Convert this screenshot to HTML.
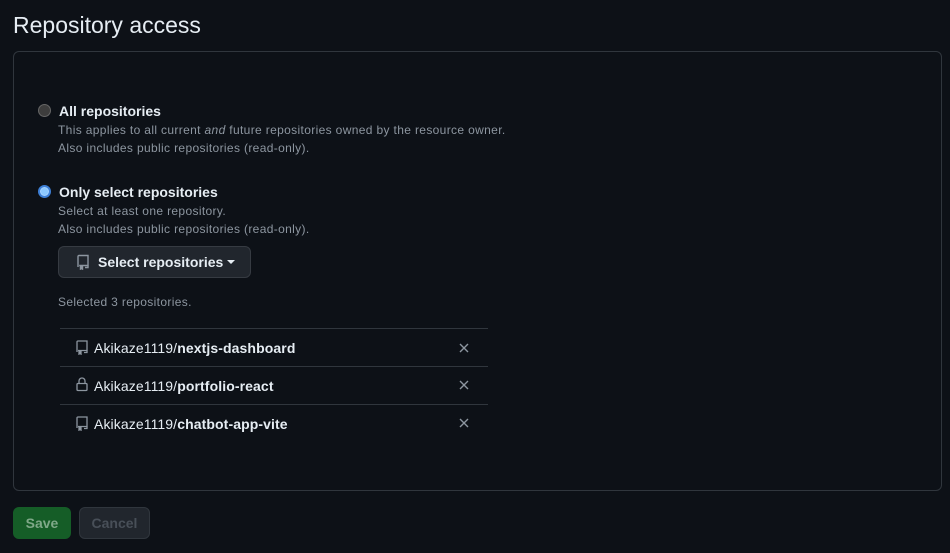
<!DOCTYPE html>
<html><head><meta charset="utf-8"><style>
*{margin:0;padding:0;box-sizing:border-box}
body{width:950px;height:553px;background:#0d1117;font-family:"Liberation Sans",sans-serif;color:#e6edf3;position:relative;overflow:hidden}
.a{position:absolute;white-space:nowrap}
.t{font-size:23px;left:13px;top:12px}
.box{position:absolute;left:13px;top:51px;width:929px;height:440px;border:1px solid #30363d;border-radius:6px}
.lab{font-size:14px;font-weight:bold}
.d{font-size:12px;color:#8d96a0;letter-spacing:0.35px}
.r{position:absolute;width:13px;height:13px;border-radius:50%}
.btn{position:absolute;left:58px;top:246px;width:193px;height:32px;background:#21262d;border:1px solid #363b42;border-radius:6px}
.ln{position:absolute;left:60px;width:428px;height:1px;background:#30363d}
.row{font-size:14px;letter-spacing:0.1px}
.row b{font-weight:bold}
</style></head><body>
<div class="a t">Repository access</div>
<div class="box"></div>
<div class="r" style="left:38px;top:104px;background:#3d3d3d;border:1px solid #666"></div>
<div class="a lab" style="left:59px;top:103px">All repositories</div>
<div class="a d" style="left:58px;top:123px">This applies to all current <i>and</i> future repositories owned by the resource owner.</div>
<div class="a d" style="left:58px;top:141px">Also includes public repositories (read-only).</div>
<div class="r" style="left:38px;top:185px;background:#8cc8ff;border:2px solid #3d7fd6;box-shadow:0 0 0 1px #a7d3ff inset"></div>
<div class="a lab" style="left:59px;top:184px">Only select repositories</div>
<div class="a d" style="left:58px;top:204px">Select at least one repository.</div>
<div class="a d" style="left:58px;top:222px">Also includes public repositories (read-only).</div>
<div class="btn"></div>
<svg class="a" style="left:76px;top:254px" width="14" height="16" viewBox="0 0 14 16" fill="none" stroke="#8d96a0" stroke-width="1.4"><path d="M2 13V2.5C2 1.9 2.5 1.5 3 1.5h9v10H3.2"/><path d="M4.5 12v3l1-0.8 1 0.8v-3z" fill="#8d96a0"/><path d="M12 11.5v2h-3"/></svg>
<div class="a lab" style="left:98px;top:254px">Select repositories</div>
<svg class="a" style="left:227px;top:260px" width="8" height="5"><path d="M0 0h8L4 4z" fill="#e6edf3"/></svg>
<div class="a d" style="left:58px;top:295px">Selected 3 repositories.</div>
<div class="ln" style="top:328px"></div>
<div class="ln" style="top:366px"></div>
<div class="ln" style="top:404px"></div>
<svg class="a" style="left:76px;top:340px" width="12" height="15" viewBox="0 0 12 15" fill="none" stroke="#8d96a0" stroke-width="1.3"><path d="M1 12V1.8C1 1.3 1.4 1 2 1h9v9.5H2"/><path d="M3 11v3l1-0.8 1 0.8v-3z" fill="#8d96a0"/><path d="M11 10.5v2H8"/></svg>
<div class="a row" style="left:94px;top:340px">Akikaze1119/<b>nextjs-dashboard</b></div>
<svg class="a" style="left:76px;top:377px" width="12" height="15" viewBox="0 0 12 15" fill="none" stroke="#8d96a0" stroke-width="1.3"><rect x="1" y="6.5" width="10" height="7" rx="1"/><path d="M3 6.5V4a3 3 0 0 1 6 0v2.5"/></svg>
<div class="a row" style="left:94px;top:378px">Akikaze1119/<b>portfolio-react</b></div>
<svg class="a" style="left:76px;top:416px" width="12" height="15" viewBox="0 0 12 15" fill="none" stroke="#8d96a0" stroke-width="1.3"><path d="M1 12V1.8C1 1.3 1.4 1 2 1h9v9.5H2"/><path d="M3 11v3l1-0.8 1 0.8v-3z" fill="#8d96a0"/><path d="M11 10.5v2H8"/></svg>
<div class="a row" style="left:94px;top:416px">Akikaze1119/<b>chatbot-app-vite</b></div>
<svg class="a" style="left:459px;top:343px" width="10" height="10" stroke="#8d96a0" stroke-width="1.4"><path d="M1 1l8 8M9 1l-8 8"/></svg>
<svg class="a" style="left:459px;top:380px" width="10" height="10" stroke="#8d96a0" stroke-width="1.4"><path d="M1 1l8 8M9 1l-8 8"/></svg>
<svg class="a" style="left:459px;top:418px" width="10" height="10" stroke="#8d96a0" stroke-width="1.4"><path d="M1 1l8 8M9 1l-8 8"/></svg>
<div class="a" style="left:13px;top:507px;width:58px;height:32px;background:#155d27;border-radius:6px;color:#7fa888;font-size:14px;font-weight:bold;text-align:center;line-height:32px">Save</div>
<div class="a" style="left:79px;top:507px;width:71px;height:32px;background:#21262d;border:1px solid #30363d;border-radius:6px;color:#484f58;font-size:14px;font-weight:bold;text-align:center;line-height:30px">Cancel</div>
</body></html>
